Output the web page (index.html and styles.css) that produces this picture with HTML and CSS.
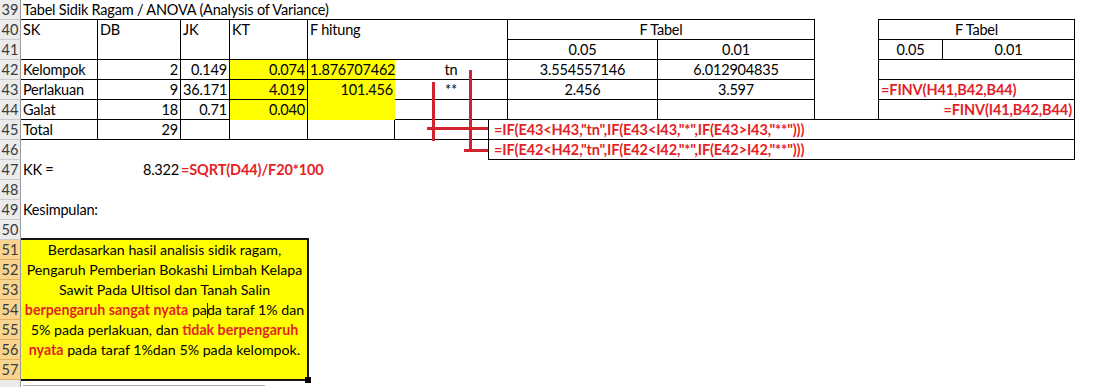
FILE: index.html
```html
<!DOCTYPE html>
<html>
<head>
<meta charset="utf-8">
<link rel="stylesheet" href="styles.css">
</head>
<body>
<div class="sheet">
  <!-- row 39 -->
  <div class="c h">39</div>
  <div class="c s8 bb">Tabel Sidik Ragam / ANOVA (Analysis of Variance)</div>
  <div class="c"></div>
  <div class="c s2 bb"></div>
  <div class="c"></div>
  <!-- row 40 -->
  <div class="c h">40</div>
  <div class="c rs2 br bb">SK</div>
  <div class="c rs2 br bb">DB</div>
  <div class="c rs2 br bb">JK</div>
  <div class="c rs2 br bb">KT</div>
  <div class="c s2 rs2 br bb">F hitung</div>
  <div class="c s2 br bb ct">F Tabel</div>
  <div class="c"></div>
  <div class="c s2 bl br bb ct">F Tabel</div>
  <div class="c"></div>
  <!-- row 41 -->
  <div class="c h">41</div>
  <div class="c br bb ct">0.05</div>
  <div class="c br bb ct">0.01</div>
  <div class="c"></div>
  <div class="c bl br bb ct">0.05</div>
  <div class="c br bb ct">0.01</div>
  <div class="c"></div>
  <!-- row 42 -->
  <div class="c h">42</div>
  <div class="c br bb">Kelompok</div>
  <div class="c br bb r">2</div>
  <div class="c br bb r">0.149</div>
  <div class="c br bb r y">0.074</div>
  <div class="c bb r y">1.876707462</div>
  <div class="c br bb ct">tn</div>
  <div class="c br bb ct">3.554557146</div>
  <div class="c br bb ct">6.012904835</div>
  <div class="c"></div>
  <div class="c s2 bl br bb"></div>
  <div class="c"></div>
  <!-- row 43 -->
  <div class="c h">43</div>
  <div class="c br bb">Perlakuan</div>
  <div class="c br bb r">9</div>
  <div class="c br bb r">36.171</div>
  <div class="c br bb r y">4.019</div>
  <div class="c r y">101.456</div>
  <div class="c br bb ct">**</div>
  <div class="c br bb ct">2.456</div>
  <div class="c br bb ct">3.597</div>
  <div class="c"></div>
  <div class="c s2 bl br bb red">=FINV(H41,B42,B44)</div>
  <div class="c"></div>
  <!-- row 44 -->
  <div class="c h">44</div>
  <div class="c br bb">Galat</div>
  <div class="c br bb r">18</div>
  <div class="c br bb r">0.71</div>
  <div class="c br r y">0.040</div>
  <div class="c y"></div>
  <div class="c br bb"></div>
  <div class="c br bb"></div>
  <div class="c br bb"></div>
  <div class="c"></div>
  <div class="c s2 bl br bb red r">=FINV(I41,B42,B44)</div>
  <div class="c"></div>
  <!-- row 45 -->
  <div class="c h">45</div>
  <div class="c br bb">Total</div>
  <div class="c br bb r">29</div>
  <div class="c br bb"></div>
  <div class="c br bb"></div>
  <div class="c br bb"></div>
  <div class="c br bb"></div>
  <div class="c s6"></div>
  <!-- row 46 -->
  <div class="c h">46</div>
  <div class="c s12"></div>
  <!-- row 47 -->
  <div class="c h">47</div>
  <div class="c">KK =</div>
  <div class="c r">8.322</div>
  <div class="c s10 red tight">=SQRT(D44)/F20*100</div>
  <!-- row 48 -->
  <div class="c h">48</div>
  <div class="c s12"></div>
  <!-- row 49 -->
  <div class="c h">49</div>
  <div class="c s12">Kesimpulan:</div>
  <!-- row 50 -->
  <div class="c h">50</div>
  <div class="c s12"></div>
  <!-- row 51-57 -->
  <div class="c h sel">51</div>
  <div class="note">
    Berdasarkan hasil analisis sidik ragam,<br>
    Pengaruh Pemberian Bokashi Limbah Kelapa<br>
    Sawit Pada Ultisol dan Tanah Salin<br>
    <span class="red">berpengaruh sangat nyata</span> pa<span class="caret"></span>da taraf 1% dan<br>
    5% pada perlakuan, dan <span class="red">tidak berpengaruh</span><br>
    <span class="red">nyata</span> pada taraf 1%dan 5% pada kelompok.
  </div>
  <div class="c s8"></div>
  <div class="c h sel">52</div>
  <div class="c s8"></div>
  <div class="c h sel">53</div>
  <div class="c s8"></div>
  <div class="c h sel">54</div>
  <div class="c s8"></div>
  <div class="c h sel">55</div>
  <div class="c s8"></div>
  <div class="c h sel">56</div>
  <div class="c s8"></div>
  <div class="c h sel">57</div>
  <div class="c s8"></div>
  <!-- row 58 (cut off at the bottom edge) -->
  <div class="c h"></div>
  <div class="c s12"><div class="scrolltop"></div></div>

  <svg class="links" width="1101" height="387" viewBox="0 0 1101 387">
    <rect x="432" y="82" width="3" height="59" fill="#d2232e"/>
    <rect x="469" y="70" width="3" height="82" fill="#d2232e"/>
    <rect x="427" y="127" width="61" height="3" fill="#d2232e"/>
    <rect x="464" y="149" width="24" height="3" fill="#d2232e"/>
  </svg>

  <div class="fbox">
    <div class="fline red">=IF(E43&lt;H43,"tn",IF(E43&lt;I43,"*",IF(E43&gt;I43,"**")))</div>
    <div class="fline red">=IF(E42&lt;H42,"tn",IF(E42&lt;I42,"*",IF(E42&gt;I42,"**")))</div>
  </div>
</div>
</body>
</html>
```

FILE: styles.css
```css
html, body {
  margin: 0;
  padding: 0;
  background: #ffffff;
}
body {
  font-family: Lato, "Open Sans", "Liberation Sans", sans-serif;
  font-size: 14.5px;
  letter-spacing: -0.2px;
  color: #000;
  overflow: hidden;
}
.sheet {
  position: relative;
  display: grid;
  grid-template-columns: 21px 77px 83px 49px 78px 87px 113px 150px 157px 63px 65px 132px 26px;
  grid-template-rows: repeat(20, 20px);
  width: 1101px;
  height: 387px;
  overflow: hidden;
}
.c {
  box-sizing: border-box;
  padding: 0 2px;
  line-height: 20px;
  white-space: nowrap;
  min-width: 0;
}
.h {
  padding: 0;
  background: #ebebeb;
  border-right: 1px solid #9b9b9b;
  border-bottom: 1px solid #cbcbcb;
  text-align: center;
  color: #3a3a3a;
  letter-spacing: 0;
}
.h.sel {
  background: #f8d48e;
  border-bottom-color: #e2b160;
}
.bb { border-bottom: 1px solid #000; }
.br { border-right: 1px solid #000; }
.bl { border-left: 1px solid #000; }
.r { text-align: right; }
.ct { text-align: center; }
.y { background: #ffff00; }
.red { color: #e41f26; font-weight: 700; letter-spacing: -0.12px; }
.tight { padding-left: 0; }
.s2 { grid-column: span 2; }
.s6 { grid-column: span 6; }
.s8 { grid-column: span 8; }
.s10 { grid-column: span 10; }
.s12 { grid-column: span 12; }
.rs2 { grid-row: span 2; }

.note {
  grid-column: span 4;
  grid-row: span 7;
  position: relative;
  background: #ffff00;
  text-align: center;
  font-size: 14.2px;
  letter-spacing: 0;
  line-height: 20px;
  white-space: nowrap;
}
.note .red { letter-spacing: 0; }
.note::after {
  content: "";
  position: absolute;
  left: 0;
  top: -2px;
  right: -1px;
  bottom: -1px;
  border-top: 2px solid #151515;
  border-right: 2px solid #151515;
  border-bottom: 2px solid #151515;
}
.note::before {
  content: "";
  position: absolute;
  right: -3px;
  bottom: -3px;
  width: 6px;
  height: 6px;
  background: #000;
  z-index: 2;
}
.caret {
  display: inline-block;
  width: 1px;
  height: 15px;
  background: #222;
  vertical-align: -3px;
  margin-right: -1px;
}
.scrolltop {
  width: 242px;
  margin-top: 5px;
  border-top: 1px solid #a9a9a9;
}
.links {
  position: absolute;
  left: 0;
  top: 0;
  pointer-events: none;
}
.fbox {
  position: absolute;
  left: 488px;
  top: 119px;
  width: 587px;
  box-sizing: border-box;
  border: 1px solid #000;
  border-bottom: 0;
  background: #fff;
}
.fline {
  height: 20px;
  box-sizing: border-box;
  line-height: 19px;
  padding-left: 5px;
  border-bottom: 1px solid #000;
  white-space: nowrap;
}
```
